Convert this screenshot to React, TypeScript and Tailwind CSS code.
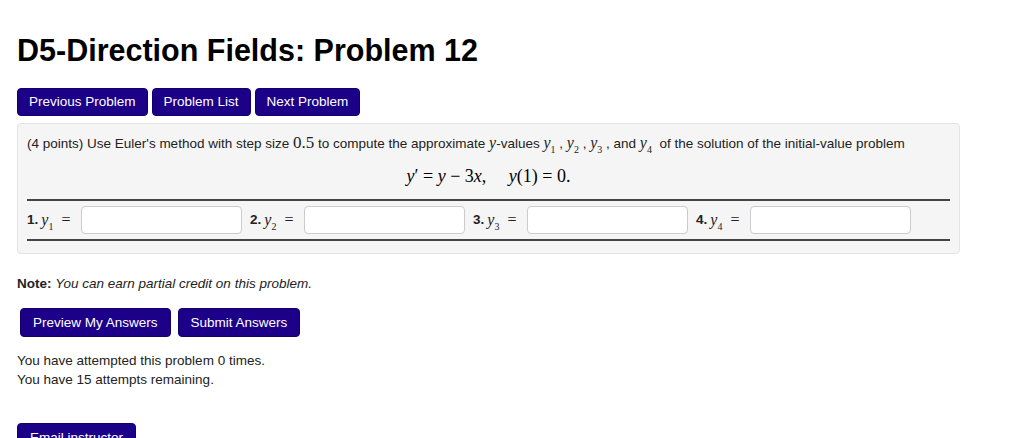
import React from "react"

const navButtons = ["Previous Problem", "Problem List", "Next Problem"]

function Btn({ label, className = "" }: { label: string; className?: string }) {
  return (
    <button
      className={
        "rounded-[4px] border border-[#14006a] bg-[#1d0088] text-white leading-none " + className
      }
    >
      {label}
    </button>
  )
}

function V({ n }: { n: number }) {
  return (
    <span className="font-['Liberation_Serif',serif] italic text-[16px]">
      y<sub className="not-italic text-[10px] align-[-2px] leading-none">{n}</sub>
    </span>
  )
}

function AnswerCell({ n }: { n: number }) {
  return (
    <div className="flex items-center w-[223px]">
      <div className="w-[54px] flex items-center gap-[3px] text-[#222]">
        <span className="font-bold">{n}.</span>
        <V n={n} />
        <span className="ml-[5px] font-['Liberation_Serif',serif] text-[16px]">=</span>
      </div>
      <input className="w-[161px] h-[28px] rounded-[4px] border border-[#ccc] bg-white" />
    </div>
  )
}

export default function App() {
  return (
    <div className="min-h-screen bg-white px-[17px] pt-[33px] text-[13.5px] text-[#222] font-['Liberation_Sans',Arial,sans-serif]">
      <h1 className="text-[30.5px] font-bold leading-[34px] text-black">
        D5-Direction Fields: Problem 12
      </h1>

      <div className="mt-[21px] flex gap-[4px]">
        {navButtons.map((b) => (
          <Btn key={b} label={b} className="h-[28px] px-[11px] text-[13.5px]" />
        ))}
      </div>

      <div className="mt-[7px] w-[943px] rounded-[4px] border border-[#e3e3e3] bg-[#f5f5f5] px-[9px] pt-[9px] pb-[12px]">
        <p className="leading-[20px] whitespace-nowrap">
          (4 points) Use Euler's method with step size{" "}
          <span className="font-['Liberation_Serif',serif] text-[17px]">0.5</span> to compute the
          approximate <span className="font-['Liberation_Serif',serif] italic text-[16px]">y</span>
          -values <V n={1} /> , <V n={2} /> , <V n={3} /> , and <V n={4} />
          &nbsp; of the solution of the initial-value problem
        </p>
        <div className="mt-[11px] text-center font-['Liberation_Serif',serif] text-[18px] leading-[22px] text-black">
          <i>y</i>′ = <i>y</i> − 3<i>x</i>,&nbsp;&nbsp;&nbsp;&nbsp; <i>y</i>(1) = 0.
        </div>
        <div className="mt-[12px] border-t-2 border-b-2 border-[#444] py-[5px] flex">
          {[1, 2, 3, 4].map((n) => (
            <AnswerCell key={n} n={n} />
          ))}
        </div>
      </div>

      <p className="mt-[21px] leading-[18px]">
        <b>Note:</b> <i>You can earn partial credit on this problem.</i>
      </p>

      <div className="mt-[15px] ml-[3px] flex gap-[7px]">
        <Btn label="Preview My Answers" className="h-[29px] px-[12px] text-[13.5px]" />
        <Btn label="Submit Answers" className="h-[29px] px-[12px] text-[13.5px]" />
      </div>

      <div className="mt-[14px] leading-[19px]">
        <p>You have attempted this problem 0 times.</p>
        <p>You have 15 attempts remaining.</p>
      </div>

      <div className="mt-[34px]">
        <Btn label="Email instructor" className="h-[29px] px-[12px] text-[13.5px]" />
      </div>
    </div>
  )
}
